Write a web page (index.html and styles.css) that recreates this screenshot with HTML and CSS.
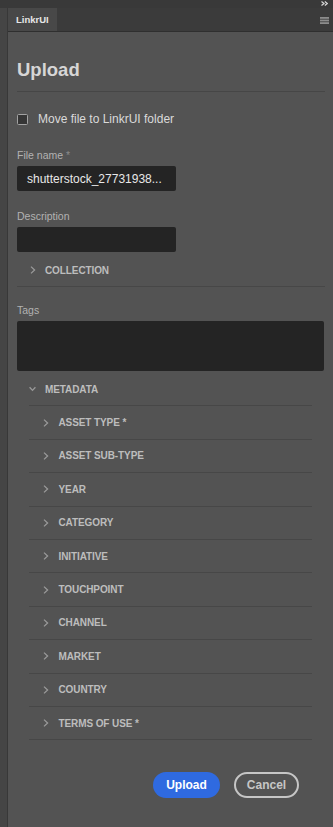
FILE: index.html
```html
<!DOCTYPE html>
<html lang="en">
<head>
    <meta charset="UTF-8">
    <meta name="viewport" content="width=device-width, initial-scale=1.0">
    <title>LinkrUI - Upload</title>
    <link rel="stylesheet" href="styles.css">
</head>
<body>
    <div class="app">
        <div class="top-strip">
            <svg class="collapse" width="7" height="5" viewBox="0 0 7 5">
                <path d="M0.5 0.5 L3 2.5 L0.5 4.5 M3.8 0.5 L6.3 2.5 L3.8 4.5" fill="none" stroke="#d8d8d8" stroke-width="1.2"/>
            </svg>
        </div>
        <div class="frame">
            <div class="gutter"></div>
            <div class="window">
                <div class="tabbar">
                    <div class="tab">LinkrUI</div>
                    <svg class="menu" width="9" height="7" viewBox="0 0 9 7">
                        <rect x="0" y="0" width="9" height="1.8" fill="#8c8c8c"/>
                        <rect x="0" y="2.6" width="9" height="1.8" fill="#8c8c8c"/>
                        <rect x="0" y="5.2" width="9" height="1.8" fill="#8c8c8c"/>
                    </svg>
                </div>

                <div class="panel">
                    <h1>Upload</h1>
                    <div class="divider"></div>

                    <label class="check-row">
                        <span class="checkbox"></span>
                        Move file to LinkrUI folder
                    </label>

                    <div class="field field-file">
                        <div class="label">File name <span class="req">*</span></div>
                        <div class="input">shutterstock_27731938...</div>
                    </div>

                    <div class="field field-desc">
                        <div class="label">Description</div>
                        <div class="input"></div>
                    </div>

                    <div class="section-row">
                        <svg class="chev" width="6" height="10" viewBox="0 0 6 10"><path d="M1 1.6 L4.6 5 L1 8.4" fill="none" stroke="#9a9a9a" stroke-width="1.3"/></svg>
                        <span class="row-text">COLLECTION</span>
                    </div>

                    <div class="field field-tags">
                        <div class="label">Tags</div>
                        <div class="textarea"></div>
                    </div>

                    <div class="meta">
                        <div class="meta-head">
                            <svg class="chev-down" width="7" height="10" viewBox="0 0 7 10"><path d="M0.6 3.2 L3.5 6.4 L6.4 3.2" fill="none" stroke="#9a9a9a" stroke-width="1.3"/></svg>
                            <span class="row-text">METADATA</span>
                        </div>
                        <div class="meta-item">
                            <svg class="chev" width="6" height="10" viewBox="0 0 6 10"><path d="M1 1.6 L4.6 5 L1 8.4" fill="none" stroke="#9a9a9a" stroke-width="1.3"/></svg>
                            <span class="row-text">ASSET TYPE *</span>
                        </div>
                        <div class="meta-item">
                            <svg class="chev" width="6" height="10" viewBox="0 0 6 10"><path d="M1 1.6 L4.6 5 L1 8.4" fill="none" stroke="#9a9a9a" stroke-width="1.3"/></svg>
                            <span class="row-text">ASSET SUB-TYPE</span>
                        </div>
                        <div class="meta-item">
                            <svg class="chev" width="6" height="10" viewBox="0 0 6 10"><path d="M1 1.6 L4.6 5 L1 8.4" fill="none" stroke="#9a9a9a" stroke-width="1.3"/></svg>
                            <span class="row-text">YEAR</span>
                        </div>
                        <div class="meta-item">
                            <svg class="chev" width="6" height="10" viewBox="0 0 6 10"><path d="M1 1.6 L4.6 5 L1 8.4" fill="none" stroke="#9a9a9a" stroke-width="1.3"/></svg>
                            <span class="row-text">CATEGORY</span>
                        </div>
                        <div class="meta-item">
                            <svg class="chev" width="6" height="10" viewBox="0 0 6 10"><path d="M1 1.6 L4.6 5 L1 8.4" fill="none" stroke="#9a9a9a" stroke-width="1.3"/></svg>
                            <span class="row-text">INITIATIVE</span>
                        </div>
                        <div class="meta-item">
                            <svg class="chev" width="6" height="10" viewBox="0 0 6 10"><path d="M1 1.6 L4.6 5 L1 8.4" fill="none" stroke="#9a9a9a" stroke-width="1.3"/></svg>
                            <span class="row-text">TOUCHPOINT</span>
                        </div>
                        <div class="meta-item">
                            <svg class="chev" width="6" height="10" viewBox="0 0 6 10"><path d="M1 1.6 L4.6 5 L1 8.4" fill="none" stroke="#9a9a9a" stroke-width="1.3"/></svg>
                            <span class="row-text">CHANNEL</span>
                        </div>
                        <div class="meta-item">
                            <svg class="chev" width="6" height="10" viewBox="0 0 6 10"><path d="M1 1.6 L4.6 5 L1 8.4" fill="none" stroke="#9a9a9a" stroke-width="1.3"/></svg>
                            <span class="row-text">MARKET</span>
                        </div>
                        <div class="meta-item">
                            <svg class="chev" width="6" height="10" viewBox="0 0 6 10"><path d="M1 1.6 L4.6 5 L1 8.4" fill="none" stroke="#9a9a9a" stroke-width="1.3"/></svg>
                            <span class="row-text">COUNTRY</span>
                        </div>
                        <div class="meta-item">
                            <svg class="chev" width="6" height="10" viewBox="0 0 6 10"><path d="M1 1.6 L4.6 5 L1 8.4" fill="none" stroke="#9a9a9a" stroke-width="1.3"/></svg>
                            <span class="row-text">TERMS OF USE *</span>
                        </div>
                    </div>

                    <div class="actions">
                        <button class="btn btn-primary">Upload</button>
                        <button class="btn btn-secondary">Cancel</button>
                    </div>
                </div>
            </div>
        </div>
    </div>
</body>
</html>
```

FILE: styles.css
```css
* {
    box-sizing: border-box;
}

body {
    margin: 0;
    background-color: #3a3a3a;
    font-family: "Liberation Sans", Arial, sans-serif;
}

.app {
    height: 100vh;
    display: flex;
    flex-direction: column;
}

.top-strip {
    height: 8px;
    background-color: #393939;
    display: flex;
    justify-content: flex-end;
    align-items: flex-start;
    padding: 1px 5px 0 0;
}

.frame {
    flex: 1;
    display: flex;
}

.gutter {
    width: 8px;
    background-color: #454545;
    border-right: 1px solid #383838;
}

.window {
    flex: 1;
    display: flex;
    flex-direction: column;
}

.tabbar {
    height: 24px;
    background-color: #3b3b3b;
    border-bottom: 1px solid #2f2f2f;
    display: flex;
    justify-content: space-between;
    align-items: center;
}

.tab {
    height: 100%;
    padding: 0 8px;
    background-color: #484848;
    color: #e6e6e6;
    font-size: 9.5px;
    font-weight: bold;
    display: flex;
    align-items: center;
}

.menu {
    margin-right: 4px;
    margin-top: 1px;
}

.panel {
    flex: 1;
    background-color: #535353;
    padding: 26px 8px 0 9px;
}

h1 {
    margin: 0;
    font-size: 18.5px;
    line-height: 23px;
    color: #d6d6d6;
    font-weight: bold;
}

.divider {
    margin-top: 10px;
    height: 1px;
    background-color: #464646;
}

.check-row {
    margin-top: 17px;
    height: 20px;
    display: flex;
    align-items: center;
    gap: 10px;
    font-size: 12px;
    color: #dadada;
}

.checkbox {
    width: 11px;
    height: 11px;
    border: 1.5px solid #a2a2a2;
    border-radius: 1.5px;
    background-color: #353535;
}

.field-file {
    margin-top: 19px;
}

.field-desc {
    margin-top: 18px;
}

.field-tags {
    margin-top: 16px;
}

.label {
    font-size: 10.5px;
    line-height: 14px;
    color: #b2b2b2;
    margin-bottom: 4px;
}

.req {
    color: #8a8a8a;
}

.input {
    width: 159px;
    height: 25px;
    background-color: #242424;
    border-radius: 2px;
    color: #e8e8e8;
    font-size: 12px;
    line-height: 26px;
    padding-left: 10px;
}

.textarea {
    width: 307px;
    height: 50px;
    background-color: #242424;
    border-radius: 2px;
}

.section-row {
    margin-top: 2px;
    height: 33px;
    border-bottom: 1px solid #474747;
    display: flex;
    align-items: center;
    padding-left: 12.5px;
}

.row-text {
    font-size: 10px;
    font-weight: bold;
    color: #bdbdbd;
    letter-spacing: -0.1px;
}

.chev {
    margin-right: 9.5px;
}

.chev-down {
    margin-right: 9px;
}

.meta {
    margin: 2px 13px 0 12px;
}

.meta-head {
    height: 33.4px;
    border-bottom: 1px solid #474747;
    display: flex;
    align-items: center;
}

.meta-item {
    height: 33.4px;
    border-bottom: 1px solid #474747;
    display: flex;
    align-items: center;
    padding-left: 14px;
}

.actions {
    margin-top: 32px;
    display: flex;
    justify-content: flex-end;
    gap: 14px;
    padding-right: 26px;
}

.btn {
    height: 26px;
    border-radius: 13px;
    font-family: "Liberation Sans", Arial, sans-serif;
    font-size: 12px;
    font-weight: bold;
    cursor: pointer;
}

.btn-primary {
    width: 67px;
    border: none;
    background-color: #2f6ae0;
    color: #ffffff;
}

.btn-secondary {
    width: 65px;
    border: 2px solid #c6c6c6;
    background-color: transparent;
    color: #c6c6c6;
}
```
